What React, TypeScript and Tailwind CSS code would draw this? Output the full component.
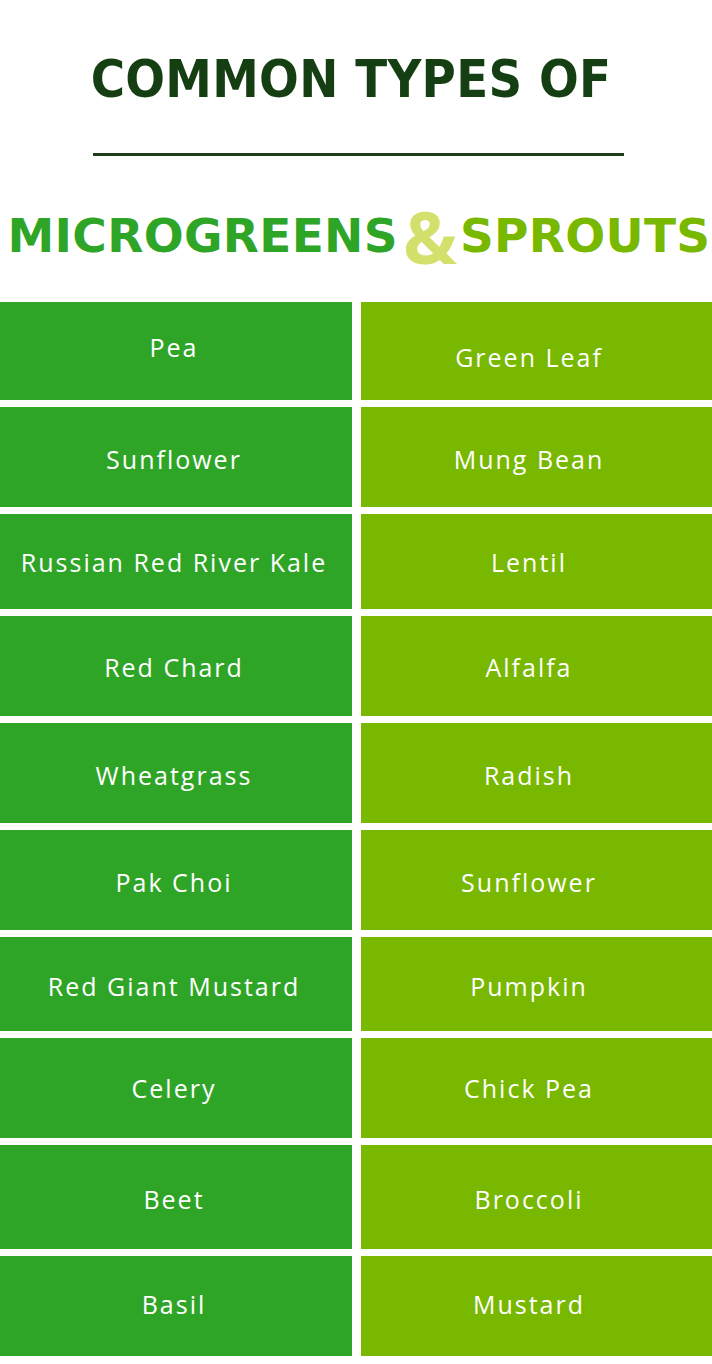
import React from "react";

const rows: [string, string][] = [
  ["Pea", "Green Leaf"],
  ["Sunflower", "Mung Bean"],
  ["Russian Red River Kale", "Lentil"],
  ["Red Chard", "Alfalfa"],
  ["Wheatgrass", "Radish"],
  ["Pak Choi", "Sunflower"],
  ["Red Giant Mustard", "Pumpkin"],
  ["Celery", "Chick Pea"],
  ["Beet", "Broccoli"],
  ["Basil", "Mustard"],
];

const leftShift = [
  "-mt-[6px]",
  "mt-[6px]",
  "mt-[2px]",
  "mt-[4px]",
  "mt-[6px]",
  "mt-[6px]",
  "mt-[6px]",
  "mt-[2px]",
  "mt-[6px]",
  "-mt-[2px]",
];
const rightShift = [
  "mt-[14px]",
  "mt-[6px]",
  "mt-[2px]",
  "mt-[4px]",
  "mt-[6px]",
  "mt-[6px]",
  "mt-[6px]",
  "mt-[2px]",
  "mt-[6px]",
  "-mt-[2px]",
];

const cellFont = { fontFamily: '"Open Sans", "Noto Sans", sans-serif' };

export default function App() {
  return (
    <div className="w-[712px] h-[1364px] bg-white overflow-hidden">
      <div className="flex flex-col items-center">
        <h1
          className="mt-[53px] pr-[10px] text-[52px] leading-none font-bold text-[#153f12] tracking-[0.3px]"
          style={{ fontFamily: '"DejaVu Sans Condensed", "DejaVu Sans", sans-serif', fontStretch: "condensed" }}
        >
          COMMON TYPES OF
        </h1>
        <div className="mt-[48px] ml-[4px] w-[531px] h-[3px] bg-[#1c3d17]" />
        <div
          className="mt-[32px] w-full pl-[6px] flex items-baseline justify-center leading-none font-bold"
          style={{ fontFamily: '"DejaVu Sans", sans-serif' }}
        >
          <span className="text-[47px] text-[#2fa527] tracking-[0.3px]">MICROGREENS</span>
          <span
            className="relative top-[12px] ml-[5px] mr-[3px] text-[72px] text-[#d4e06c] font-bold"
            style={{ fontFamily: '"Open Sans", sans-serif' }}
          >
            &amp;
          </span>
          <span className="text-[47px] text-[#78b800] tracking-[0.3px]">SPROUTS</span>
        </div>
      </div>
      <div className="mt-[42px] grid grid-cols-[352px_351px] gap-x-[9px] gap-y-[7px] grid-rows-[98px_100px_95px_100px_100px_100px_94px_100px_104px_100px]">
        {rows.map(([a, b], i) => (
          <React.Fragment key={i}>
            <div
              className="bg-[#2fa527] flex items-center justify-center pr-[4px] text-white text-[25px] font-medium tracking-[2px]"
              style={cellFont}
            >
              <span className={leftShift[i]}>{a}</span>
            </div>
            <div
              className="bg-[#78b800] flex items-center justify-center pr-[15px] text-white text-[25px] font-medium tracking-[2px]"
              style={cellFont}
            >
              <span className={rightShift[i]}>{b}</span>
            </div>
          </React.Fragment>
        ))}
      </div>
    </div>
  );
}
